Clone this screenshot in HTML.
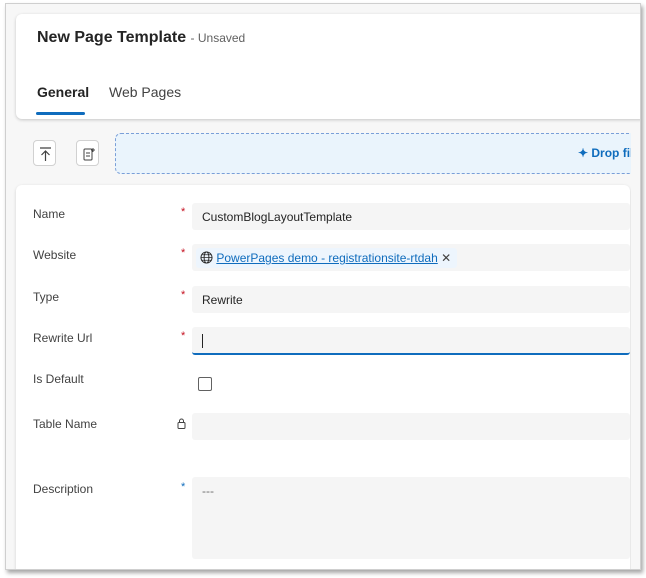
<!DOCTYPE html>
<html><head><style>
*{box-sizing:border-box;margin:0;padding:0}
body{width:646px;height:578px;background:#fff;font-family:"Liberation Sans",Arial,sans-serif;position:relative;overflow:hidden;color:#242424}
.frame{position:absolute;left:5px;top:3px;width:636px;height:567px;background:#f7f7f7;border:1px solid #cfcfcf;box-shadow:2px 3px 4px rgba(0,0,0,.35);overflow:hidden}
.hdr{position:absolute;left:10px;top:10px;width:630px;height:105px;background:#fff;border-radius:6px;box-shadow:0 1px 3px rgba(0,0,0,.2)}
.title{position:absolute;left:21px;top:15px;font-size:16px;font-weight:bold;color:#242424}
.title span{font-size:12px;font-weight:normal;color:#616161}
.tab{position:absolute;top:70px;font-size:14px}
.ul{position:absolute;left:20px;top:98px;width:49px;height:3px;background:#0f6cbd;border-radius:2px}
.btn{position:absolute;top:136px;width:23px;height:26px;border:1px solid #d1d1d1;border-radius:4px;background:#fff}
.drop{position:absolute;left:109px;top:129px;width:545px;height:41px;border:1.5px dashed #7a9fd8;border-radius:6px;background:#eaf4fc;overflow:hidden}
.drop span{position:absolute;left:462px;top:12px;color:#0f6cbd;font-size:12px;font-weight:bold;white-space:nowrap}
.clip{position:absolute;left:625px;top:120px;width:11px;height:446px;background:#f7f7f7}
.form{position:absolute;left:10px;top:181px;width:614px;height:388px;background:#fff;border-radius:6px 6px 0 0;box-shadow:0 1px 3px rgba(0,0,0,.15)}
.lbl{position:absolute;left:17px;font-size:12px;color:#424242}
.req{position:absolute;left:165px;color:#c50f1f;font-size:11px}
.fld{position:absolute;left:176px;width:438px;height:27px;background:#f5f5f5;border-radius:3px;font-size:12px;padding:7px 10px}
</style></head><body>
<div class="frame">
<div class="hdr">
<div class="title">New Page Template <span>- Unsaved</span></div>
<div class="tab" style="left:21px;font-weight:bold">General</div>
<div class="tab" style="left:93px;color:#424242">Web Pages</div>
<div class="ul"></div>
</div>
<div class="btn" style="left:27px"><svg width="23" height="26" viewBox="0 0 23 26"><path d="M6 7h11M11.5 10v10M7.5 14l4-4 4 4" stroke="#424242" stroke-width="1.2" fill="none"/></svg></div>
<div class="btn" style="left:70px"><svg width="23" height="26" viewBox="0 0 23 26"><rect x="7" y="8" width="8" height="11" rx="1" stroke="#424242" fill="none"/><path d="M9 12h4M9 15h4" stroke="#424242"/><path d="M16 7v4M14 9h4" stroke="#424242"/></svg></div>
<div class="drop"><span>✦ Drop files here</span></div>
<div class="form">
<div class="lbl" style="top:22px">Name</div><div class="req" style="top:21px">*</div>
<div class="fld" style="top:18px">CustomBlogLayoutTemplate</div>
<div class="lbl" style="top:63px">Website</div><div class="req" style="top:62px">*</div>
<div class="fld" style="top:59px;padding:4px 4px"><span style="display:inline-block;background:#edf5fd;padding:3px 6px 3px 4px;border-radius:3px"><svg width="13" height="13" viewBox="0 0 14 14" style="vertical-align:-2px"><circle cx="7" cy="7" r="6" stroke="#242424" fill="none"/><ellipse cx="7" cy="7" rx="2.6" ry="6" stroke="#242424" fill="none"/><path d="M1 7h12M2 4h10M2 10h10" stroke="#242424" stroke-width=".8"/></svg> <span style="color:#0f6cbd;text-decoration:underline">PowerPages demo - registrationsite-rtdah</span> <span style="color:#424242">✕</span></span></div>
<div class="lbl" style="top:105px">Type</div><div class="req" style="top:104px">*</div>
<div class="fld" style="top:101px">Rewrite</div>
<div class="lbl" style="top:146px">Rewrite Url</div><div class="req" style="top:145px">*</div>
<div class="fld" style="top:142px;border-bottom:2px solid #0f6cbd;height:28px"><span style="display:inline-block;width:1px;height:14px;background:#242424"></span></div>
<div class="lbl" style="top:187px">Is Default</div>
<div style="position:absolute;left:182px;top:192px;width:14px;height:14px;border:1px solid #616161;border-radius:2px"></div>
<div class="lbl" style="top:232px">Table Name</div>
<svg style="position:absolute;left:161px;top:233px" width="9" height="11" viewBox="0 0 9 11"><rect x="1" y="4.5" width="7" height="6" rx="1" stroke="#424242" fill="none"/><path d="M2.5 4.5V3a2 2 0 014 0v1.5" stroke="#424242" fill="none"/></svg>
<div class="fld" style="top:228px"></div>
<div class="lbl" style="top:297px">Description</div><div class="req" style="top:296px;color:#0f6cbd">*</div>
<div class="fld" style="top:292px;height:82px;color:#707070">---</div>
</div>
<div class="clip"></div>
</div>
</body></html>
